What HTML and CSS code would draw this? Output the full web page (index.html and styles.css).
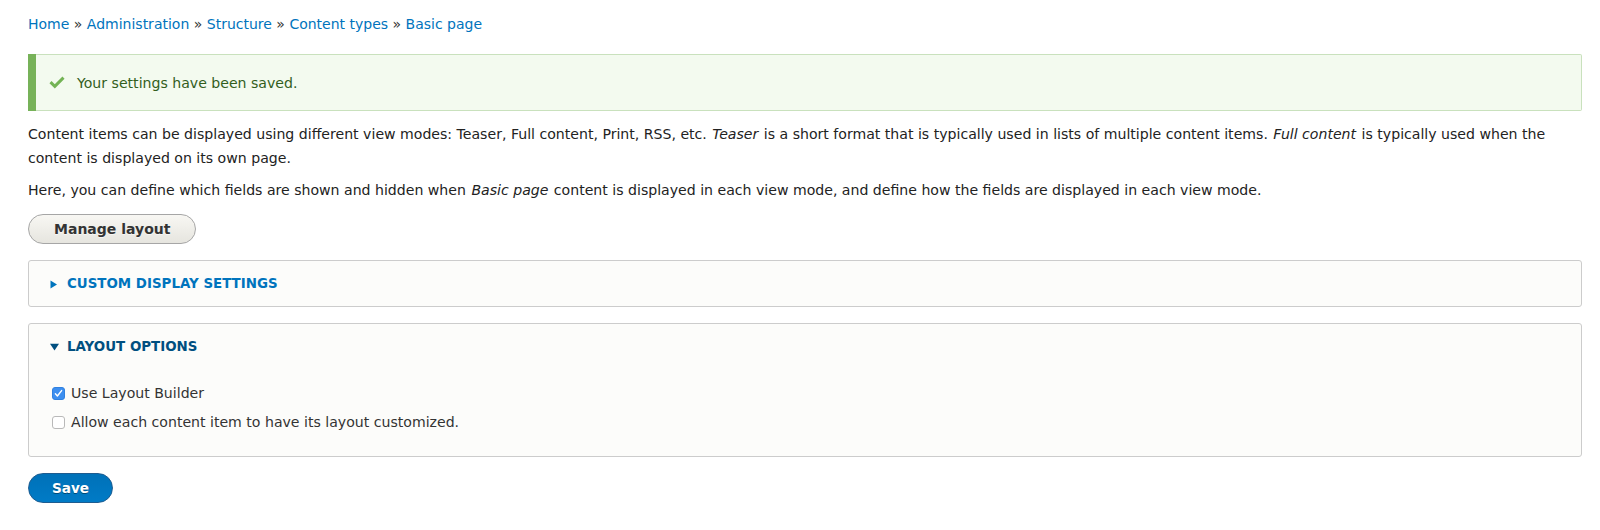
FILE: index.html
```html
<!DOCTYPE html>
<html lang="en">
<head>
<meta charset="utf-8">
<title>Basic page | Manage display</title>
<link rel="stylesheet" href="styles.css">
</head>
<body>
<div class="page">
  <nav class="breadcrumb">
    <a href="#">Home</a> <span class="sep">»</span> <a href="#">Administration</a> <span class="sep">»</span> <a href="#">Structure</a> <span class="sep">»</span> <a href="#">Content types</a> <span class="sep">»</span> <a href="#">Basic page</a>
  </nav>

  <div class="messages">
    <svg class="messages__icon" width="16" height="16" viewBox="0 0 16 16"><path d="M1.5 8.2 L5.8 12.3 L14.5 3.6" fill="none" stroke="#73b355" stroke-width="3" stroke-linecap="butt" stroke-linejoin="miter"/></svg>
    <span>Your settings have been saved.</span>
  </div>

  <p class="intro">Content items can be displayed using different view modes: Teaser, Full content, Print, RSS, etc. <em>Teaser</em> is a short format that is typically used in lists of multiple content items. <em>Full content</em> is typically used when the content is displayed on its own page.</p>
  <p class="intro intro--second">Here, you can define which fields are shown and hidden when <em>Basic page</em> content is displayed in each view mode, and define how the fields are displayed in each view mode.</p>

  <div class="actions-top"><button class="button" type="button">Manage layout</button></div>

  <details class="panel">
    <summary class="panel__summary">
      <svg class="panel__arrow" width="8" height="9" viewBox="0 0 8 9"><path d="M0.5 0.5 L7 4.5 L0.5 8.5 Z" fill="currentColor"/></svg>
      <span>Custom display settings</span>
    </summary>
  </details>

  <details class="panel panel--open" open>
    <summary class="panel__summary">
      <svg class="panel__arrow panel__arrow--down" width="9" height="8" viewBox="0 0 9 8"><path d="M0 0.8 L9 0.8 L4.5 7.5 Z" fill="currentColor"/></svg>
      <span>Layout options</span>
    </summary>
    <div class="panel__body">
      <label class="check">
        <span class="check__box check__box--on"><svg width="13" height="13" viewBox="0 0 13 13"><path d="M3.4 6.8 L5.4 9 L9.6 3.6" fill="none" stroke="#fff" stroke-width="1.4" stroke-linecap="round" stroke-linejoin="round"/></svg></span>
        <span>Use Layout Builder</span>
      </label>
      <label class="check">
        <span class="check__box"></span>
        <span>Allow each content item to have its layout customized.</span>
      </label>
    </div>
  </details>

  <div class="actions"><button class="button button--primary" type="button">Save</button></div>
</div>
</body>
</html>
```
FILE: styles.css
```css
html, body {
  margin: 0;
  padding: 0;
  background: #fff;
}
body {
  font-family: "DejaVu Sans", Verdana, sans-serif;
  font-size: 14.1px;
  line-height: 24px;
  color: #222;
}
.page {
  padding: 14px 18px 0 28px;
}
a {
  color: #0074bd;
  text-decoration: none;
}
.breadcrumb {
  line-height: 21px;
  margin-bottom: 19px;
  color: #333;
  font-size: 14px;
}
.breadcrumb .sep {
  color: #333;
}
.messages {
  margin-left: 8px;
  display: flex;
  align-items: center;
  box-sizing: border-box;
  border: 1px solid #c9e1bd;
  border-left: 0;
  border-radius: 0 2px 2px 0;
  background: #f3faef;
  box-shadow: -8px 0 0 #77b259;
  color: #325e1c;
  padding: 0 20px 0 13px;
  line-height: 20px;
  height: 57px;
}
.messages__icon {
  flex: none;
  margin-right: 12px;
  margin-top: -1px;
}
.intro {
  margin: 11px 0 0;
}
.intro em {
  padding: 0 1px;
}
.intro--second {
  margin-top: 8px;
}
.actions-top {
  margin-top: 12px;
  margin-bottom: 16px;
}
.button {
  font-family: "DejaVu Sans", Verdana, sans-serif;
  font-weight: bold;
  font-size: 14px;
  line-height: 20px;
  height: 30px;
  padding: 0 25px;
  border: 1px solid #a6a6a6;
  border-radius: 20px;
  background: linear-gradient(to top, #e6e5df, #f8f7f3);
  color: #333;
  text-shadow: 0 1px rgba(255,255,255,0.6);
  cursor: pointer;
}
.button--primary {
  background: linear-gradient(to top, #007bc6, #0071b8);
  border-color: #1e5c90;
  color: #fff;
  text-shadow: 0 1px rgba(0,0,0,0.4);
  padding: 0 23px;
  font-size: 13.6px;
}
.panel {
  border: 1px solid #cccccc;
  border-radius: 3px;
  background: #fcfcfa;
  margin: 0 0 16px;
}
.panel__summary {
  list-style: none;
  display: flex;
  align-items: center;
  padding: 13px 21px 12px;
  line-height: 20px;
  font-size: 13.4px;
  font-weight: bold;
  text-transform: uppercase;
  color: #0074bd;
  cursor: pointer;
}
.panel__summary::-webkit-details-marker {
  display: none;
}
.panel__arrow {
  flex: none;
  margin-right: 9px;
}
.panel__arrow--down {
  margin-right: 8px;
}
.panel--open > .panel__summary {
  color: #004f80;
  padding-bottom: 13px;
}
.panel__body {
  padding: 11px 23px 22px;
  display: flex;
  flex-direction: column;
  gap: 5px;
}
.check {
  display: flex;
  align-items: center;
  gap: 6px;
  line-height: 24px;
  color: #333;
}
.check__box {
  flex: none;
  width: 13px;
  height: 13px;
  box-sizing: border-box;
  border: 1px solid #b9b9b9;
  border-radius: 3px;
  background: #fff;
  display: flex;
  align-items: center;
  justify-content: center;
}
.check__box--on {
  background: #3d8ff0;
  border-color: #3081e0;
}
.check__box svg {
  display: block;
  margin: -1px;
}
.actions {
  margin-top: 16px;
}
```
